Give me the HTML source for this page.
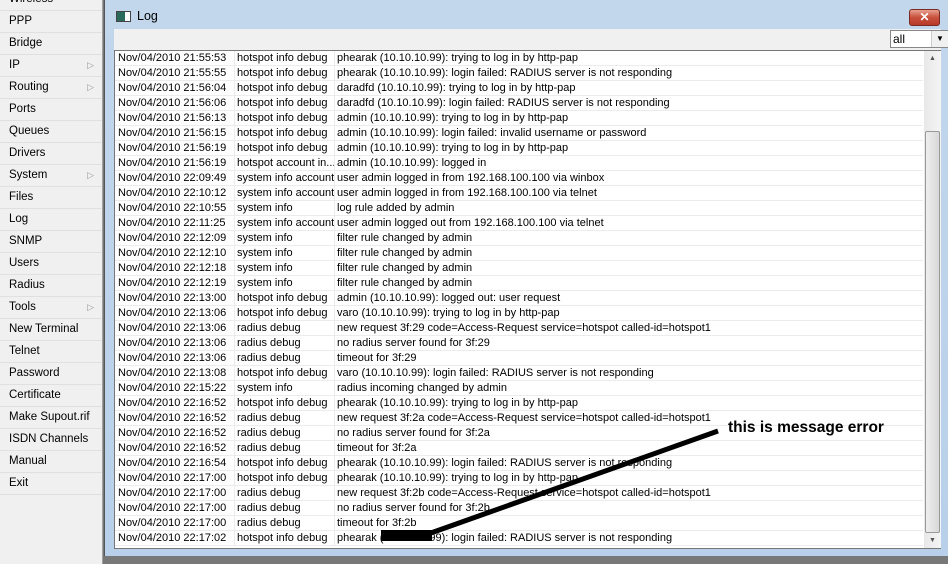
<!DOCTYPE html><html><head><style>
*{margin:0;padding:0;box-sizing:border-box}
html,body{width:948px;height:564px;overflow:hidden}
body{background:#787878;font-family:"Liberation Sans",sans-serif;font-size:11px;position:relative}
#side{position:absolute;left:0;width:103px;height:575px;background:#f0f0f0;border-right:1px solid #a0a0a0}
.mi{height:22px;line-height:21px;padding-left:9px;border-bottom:1px solid #e0e0e0;background:#f0f0f0;position:relative;font-size:11.5px;color:#000}
.mi span{position:absolute;right:8px;top:0;color:#999;font-size:9px}
#win{position:absolute;left:104px;top:0;width:844px;height:556px;background:linear-gradient(#c2d7ec,#b8d0ea);border-left:1px solid #555}
#title{position:absolute;left:32px;top:9px;font-size:12.5px}
#ico{position:absolute;left:11px;top:11px;width:15px;height:11px;border:1px solid #444;background:linear-gradient(90deg,#2a6a5a 60%,#fff 60%)}
#close{position:absolute;left:804px;top:9px;width:31px;height:17px;border:1px solid #7a2a20;border-radius:3px;background:linear-gradient(#e8a090,#c8503c 50%,#b83a28);color:#fff;text-align:center;font-weight:bold;font-size:12px;line-height:15px}
#tb{position:absolute;left:9px;top:29px;width:827px;height:21px;background:#f0f0f0}
#sel{position:absolute;left:776px;top:1px;width:59px;height:18px;border:1px solid #888;background:#fff;font-size:12px;padding-left:2px;line-height:16px}
#sel i{position:absolute;right:0;top:0;width:17px;height:16px;background:#f0f0f0;border-left:1px solid #ccc;font-style:normal;font-size:8px;text-align:center;line-height:16px}
#list{position:absolute;left:9px;top:50px;width:827px;height:499px;background:#fff;border:1px solid #777;border-right:none}
.r{height:15px;line-height:15px;border-bottom:1px solid #ececec;white-space:nowrap;position:relative;width:808px}
.r b{font-weight:normal;position:absolute;top:0}
.a{left:3px}.b{left:122px;width:97px;overflow:hidden}.c{left:222px}
.r:before,.r:after{content:"";position:absolute;top:0;height:15px;border-left:1px solid #ececec}
.r:before{left:119px}.r:after{left:219px}
#sb{position:absolute;left:809px;top:0;width:17px;height:497px;background:linear-gradient(90deg,#e8e8e8,#f4f4f4)}
#th{position:absolute;left:1px;top:80px;width:15px;height:402px;border:1px solid #999;border-radius:2px;background:linear-gradient(90deg,#eee,#d8d8d8)}
</style></head><body>
<div id="side" style="top:-11px">
<div class="mi">Wireless</div><div class="mi">PPP</div><div class="mi">Bridge</div><div class="mi">IP<span>▷</span></div><div class="mi">Routing<span>▷</span></div><div class="mi">Ports</div><div class="mi">Queues</div><div class="mi">Drivers</div><div class="mi">System<span>▷</span></div><div class="mi">Files</div><div class="mi">Log</div><div class="mi">SNMP</div><div class="mi">Users</div><div class="mi">Radius</div><div class="mi">Tools<span>▷</span></div><div class="mi">New Terminal</div><div class="mi">Telnet</div><div class="mi">Password</div><div class="mi">Certificate</div><div class="mi">Make Supout.rif</div><div class="mi">ISDN Channels</div><div class="mi">Manual</div><div class="mi">Exit</div>
</div>
<div id="win">
<div id="ico"></div><div id="title">Log</div><div id="close">✕</div>
<div id="tb"><div id="sel">all<i>▼</i></div></div>
<div id="list">
<div class="r"><b class="a">Nov/04/2010 21:55:53</b><b class="b">hotspot info debug</b><b class="c">phearak (10.10.10.99): trying to log in by http-pap</b></div>
<div class="r"><b class="a">Nov/04/2010 21:55:55</b><b class="b">hotspot info debug</b><b class="c">phearak (10.10.10.99): login failed: RADIUS server is not responding</b></div>
<div class="r"><b class="a">Nov/04/2010 21:56:04</b><b class="b">hotspot info debug</b><b class="c">daradfd (10.10.10.99): trying to log in by http-pap</b></div>
<div class="r"><b class="a">Nov/04/2010 21:56:06</b><b class="b">hotspot info debug</b><b class="c">daradfd (10.10.10.99): login failed: RADIUS server is not responding</b></div>
<div class="r"><b class="a">Nov/04/2010 21:56:13</b><b class="b">hotspot info debug</b><b class="c">admin (10.10.10.99): trying to log in by http-pap</b></div>
<div class="r"><b class="a">Nov/04/2010 21:56:15</b><b class="b">hotspot info debug</b><b class="c">admin (10.10.10.99): login failed: invalid username or password</b></div>
<div class="r"><b class="a">Nov/04/2010 21:56:19</b><b class="b">hotspot info debug</b><b class="c">admin (10.10.10.99): trying to log in by http-pap</b></div>
<div class="r"><b class="a">Nov/04/2010 21:56:19</b><b class="b">hotspot account in...</b><b class="c">admin (10.10.10.99): logged in</b></div>
<div class="r"><b class="a">Nov/04/2010 22:09:49</b><b class="b">system info account</b><b class="c">user admin logged in from 192.168.100.100 via winbox</b></div>
<div class="r"><b class="a">Nov/04/2010 22:10:12</b><b class="b">system info account</b><b class="c">user admin logged in from 192.168.100.100 via telnet</b></div>
<div class="r"><b class="a">Nov/04/2010 22:10:55</b><b class="b">system info</b><b class="c">log rule added by admin</b></div>
<div class="r"><b class="a">Nov/04/2010 22:11:25</b><b class="b">system info account</b><b class="c">user admin logged out from 192.168.100.100 via telnet</b></div>
<div class="r"><b class="a">Nov/04/2010 22:12:09</b><b class="b">system info</b><b class="c">filter rule changed by admin</b></div>
<div class="r"><b class="a">Nov/04/2010 22:12:10</b><b class="b">system info</b><b class="c">filter rule changed by admin</b></div>
<div class="r"><b class="a">Nov/04/2010 22:12:18</b><b class="b">system info</b><b class="c">filter rule changed by admin</b></div>
<div class="r"><b class="a">Nov/04/2010 22:12:19</b><b class="b">system info</b><b class="c">filter rule changed by admin</b></div>
<div class="r"><b class="a">Nov/04/2010 22:13:00</b><b class="b">hotspot info debug</b><b class="c">admin (10.10.10.99): logged out: user request</b></div>
<div class="r"><b class="a">Nov/04/2010 22:13:06</b><b class="b">hotspot info debug</b><b class="c">varo (10.10.10.99): trying to log in by http-pap</b></div>
<div class="r"><b class="a">Nov/04/2010 22:13:06</b><b class="b">radius debug</b><b class="c">new request 3f:29 code=Access-Request service=hotspot called-id=hotspot1</b></div>
<div class="r"><b class="a">Nov/04/2010 22:13:06</b><b class="b">radius debug</b><b class="c">no radius server found for 3f:29</b></div>
<div class="r"><b class="a">Nov/04/2010 22:13:06</b><b class="b">radius debug</b><b class="c">timeout for 3f:29</b></div>
<div class="r"><b class="a">Nov/04/2010 22:13:08</b><b class="b">hotspot info debug</b><b class="c">varo (10.10.10.99): login failed: RADIUS server is not responding</b></div>
<div class="r"><b class="a">Nov/04/2010 22:15:22</b><b class="b">system info</b><b class="c">radius incoming changed by admin</b></div>
<div class="r"><b class="a">Nov/04/2010 22:16:52</b><b class="b">hotspot info debug</b><b class="c">phearak (10.10.10.99): trying to log in by http-pap</b></div>
<div class="r"><b class="a">Nov/04/2010 22:16:52</b><b class="b">radius debug</b><b class="c">new request 3f:2a code=Access-Request service=hotspot called-id=hotspot1</b></div>
<div class="r"><b class="a">Nov/04/2010 22:16:52</b><b class="b">radius debug</b><b class="c">no radius server found for 3f:2a</b></div>
<div class="r"><b class="a">Nov/04/2010 22:16:52</b><b class="b">radius debug</b><b class="c">timeout for 3f:2a</b></div>
<div class="r"><b class="a">Nov/04/2010 22:16:54</b><b class="b">hotspot info debug</b><b class="c">phearak (10.10.10.99): login failed: RADIUS server is not responding</b></div>
<div class="r"><b class="a">Nov/04/2010 22:17:00</b><b class="b">hotspot info debug</b><b class="c">phearak (10.10.10.99): trying to log in by http-pap</b></div>
<div class="r"><b class="a">Nov/04/2010 22:17:00</b><b class="b">radius debug</b><b class="c">new request 3f:2b code=Access-Request service=hotspot called-id=hotspot1</b></div>
<div class="r"><b class="a">Nov/04/2010 22:17:00</b><b class="b">radius debug</b><b class="c">no radius server found for 3f:2b</b></div>
<div class="r"><b class="a">Nov/04/2010 22:17:00</b><b class="b">radius debug</b><b class="c">timeout for 3f:2b</b></div>
<div class="r"><b class="a">Nov/04/2010 22:17:02</b><b class="b">hotspot info debug</b><b class="c">phearak (10.10.10.99): login failed: RADIUS server is not responding</b></div>
<div id="sb"><div style="position:absolute;top:4px;width:17px;text-align:center;font-size:7px;color:#555">▲</div><div id="th"></div><div style="position:absolute;top:486px;width:17px;text-align:center;font-size:7px;color:#555">▼</div></div>
</div>
</div>
<svg style="position:absolute;left:0;top:0" width="948" height="564"><line x1="428" y1="534" x2="718" y2="431" stroke="#000" stroke-width="5"/><rect x="381" y="530" width="51" height="11" fill="#000"/></svg>
<div style="position:absolute;left:728px;top:419px;font-weight:bold;font-size:15.5px;color:#000">this is message error</div>
</body></html>
